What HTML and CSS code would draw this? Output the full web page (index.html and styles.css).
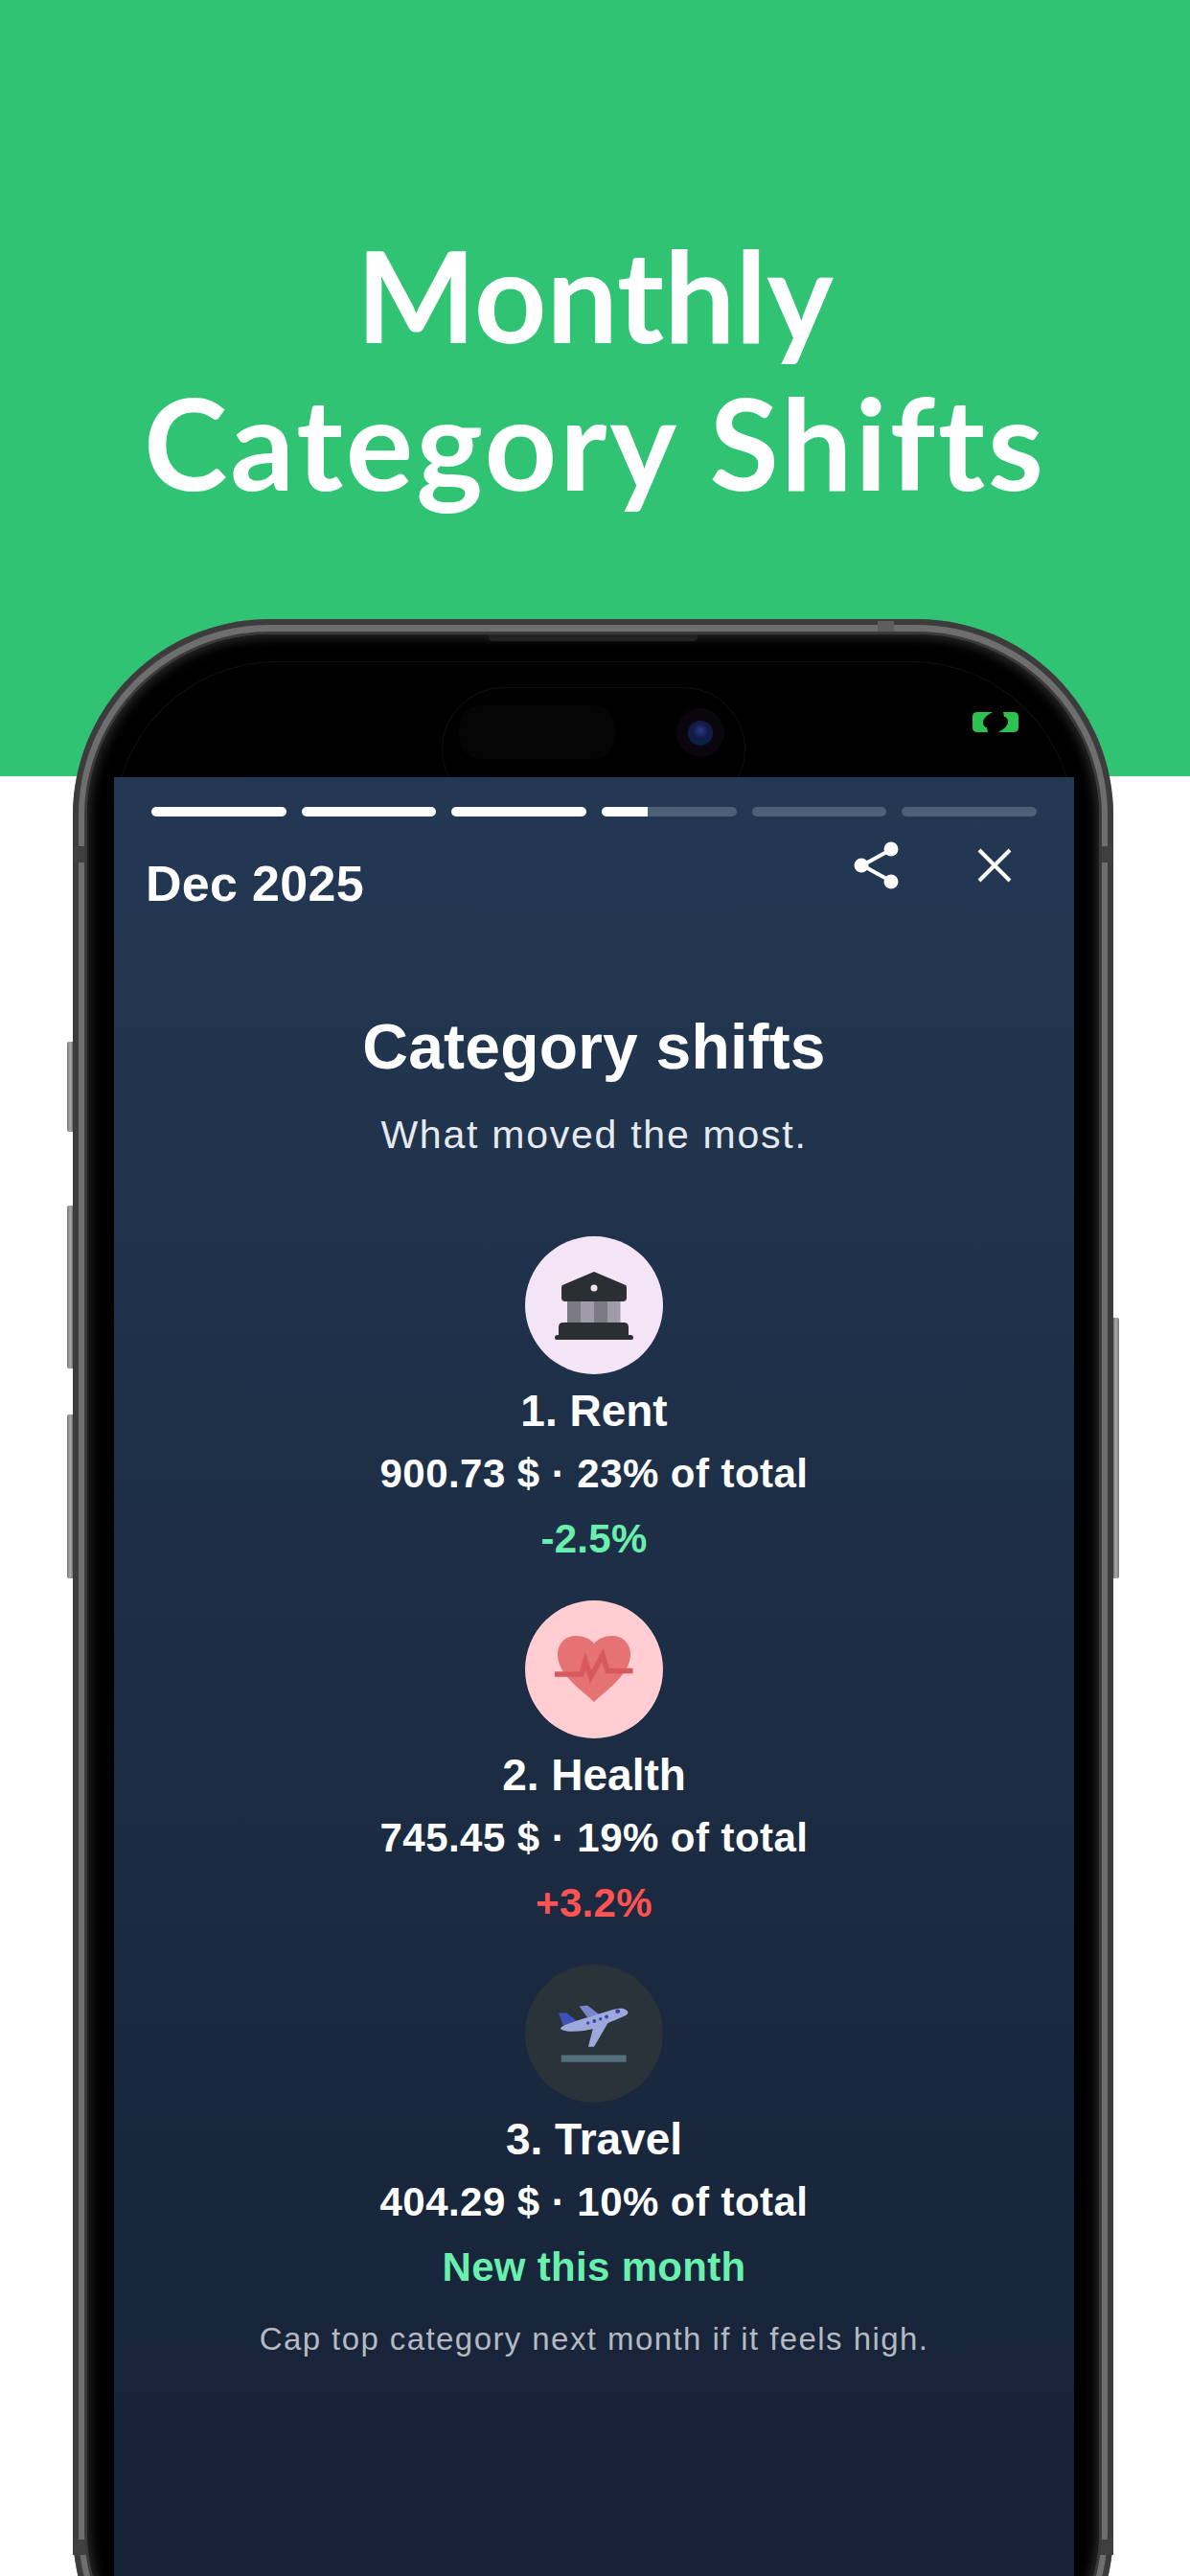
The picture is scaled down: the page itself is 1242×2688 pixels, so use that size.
FILE: index.html
```html
<!doctype html>
<html>
<head>
	<meta charset="utf-8"/>
	<title>Monthly Category Shifts</title>
	<link rel="stylesheet" href="styles.css">
</head>
<body>
<div class="page">
	<div class="hero">
		<h1>Monthly<br/><span class="wide">Category Shifts</span></h1>
	</div>

	<div class="btn btn-l1"></div>
	<div class="btn btn-l2"></div>
	<div class="btn btn-l3"></div>
	<div class="btn btn-r1"></div>

	<div class="phone">
		<div class="antenna ant-top"></div>
		<div class="antenna ant-l1"></div>
		<div class="antenna ant-r1"></div>
		<div class="antenna ant-l2"></div>
		<div class="antenna ant-r2"></div>
		<div class="bezel">
			<div class="speaker"></div>
			<div class="glass-line"></div>
			<div class="status">
				<div class="island-line"></div>
				<div class="island"></div>
				<div class="camera"><div class="lens"></div></div>
				<svg class="battery" viewBox="0 0 48 21">
					<path d="M5 0H21C15 3 11 7 11 11C11 14 13 16 15 16L16 21H5Q0 21 0 16V5Q0 0 5 0Z" fill="#2dc24f"/>
					<path d="M43 21H27C33 18 37 14 37 10C37 7 35 5 33 5L32 0H43Q48 0 48 5V16Q48 21 43 21Z" fill="#2dc24f"/>
				</svg>
			</div>
			<div class="screen">
				<div class="progress">
					<div class="bar done"></div>
					<div class="bar done"></div>
					<div class="bar done"></div>
					<div class="bar"><div class="fill"></div></div>
					<div class="bar"></div>
					<div class="bar"></div>
				</div>

				<div class="topbar">
					<div class="month">Dec 2025</div>
					<div class="actions">
						<svg class="share" viewBox="0 0 48 50">
							<line x1="38" y1="9" x2="9" y2="25" stroke="#fff" stroke-width="4"/>
							<line x1="38" y1="41" x2="9" y2="25" stroke="#fff" stroke-width="4"/>
							<circle cx="39" cy="8" r="7.500" fill="#fff"/>
							<circle cx="8" cy="25" r="7.500" fill="#fff"/>
							<circle cx="39" cy="42" r="7.500" fill="#fff"/>
						</svg>
						<svg class="close" viewBox="0 0 36 36">
							<path d="M2 2L34 34M34 2L2 34" stroke="#fff" stroke-width="4" fill="none"/>
						</svg>
					</div>
				</div>

				<h2>Category shifts</h2>
				<p class="sub">What moved the most.</p>

				<div class="shift">
					<div class="circle rent">
						<svg viewBox="0 0 144 144">
							<path d="M72 37L105 51Q106 52 106 54V64Q106 68 102 68H42Q38 68 38 64V54Q38 52 39 51Z" fill="#2b2e33"/>
							<circle cx="72" cy="54" r="3.500" fill="#f3e5f5"/>
							<rect x="44" y="68" width="14" height="22" fill="#7c7a85"/>
							<rect x="58" y="68" width="14" height="22" fill="#a09ba8"/>
							<rect x="72" y="68" width="14" height="22" fill="#7c7a85"/>
							<rect x="86" y="68" width="13.500" height="22" fill="#a09ba8"/>
							<path d="M40 90H103Q108 90 108 95V103H110Q113 103 113 106Q113 108 110 108H34Q31 108 31 106Q31 103 34 103H35V95Q35 90 40 90Z" fill="#2b2e33"/>
						</svg>
					</div>
					<div class="name">1. Rent</div>
					<div class="amount">900.73 $ · 23% of total</div>
					<div class="delta good">-2.5%</div>
				</div>

				<div class="shift">
					<div class="circle health">
						<svg viewBox="0 0 144 144">
							<path d="M72 106C60 94 34 78 34 56C34 44 43 37 53 37C61 37 68 40 72 45C76 40 83 37 91 37C101 37 110 44 110 56C110 78 84 94 72 106Z" fill="#e57373"/>
							<path d="M31 77H59L63 63L68.500 80L81 57L86 73.500H112.500" stroke="#d7595f" stroke-width="5.500" fill="none"/>
						</svg>
					</div>
					<div class="name">2. Health</div>
					<div class="amount">745.45 $ · 19% of total</div>
					<div class="delta bad">+3.2%</div>
				</div>

				<div class="shift">
					<div class="circle travel">
						<svg viewBox="0 0 144 144">
							<path d="M35 50.500H43.500L54 59L40 64Z" fill="#3f51b5"/>
							<path d="M56.500 43.500L65 42.500L78 52.500L65 55Z" fill="#7986cb"/>
							<path d="M36.700 66.700C40 62 55 58.500 72 53L90 47.500C97 45.500 102 45 105 47C109 49.500 108 52 103 54C92 59 82 63 72 66.700C60 70 42 71.500 36.700 66.700Z" fill="#9fa8da"/>
							<path d="M71 66L87 60L72 85.700H66Z" fill="#9fa8da"/>
							<circle cx="65.700" cy="61" r="1.700" fill="#3949ab"/>
							<circle cx="72.300" cy="59" r="1.900" fill="#3949ab"/>
							<circle cx="78.700" cy="56.700" r="1.700" fill="#3949ab"/>
							<circle cx="85" cy="54.400" r="2" fill="#3949ab"/>
							<ellipse cx="96.700" cy="48.700" rx="2.500" ry="2.200" fill="#3949ab"/>
							<rect x="37.700" y="94.400" width="68" height="7.300" fill="#546e7a"/>
						</svg>
					</div>
					<div class="name">3. Travel</div>
					<div class="amount">404.29 $ · 10% of total</div>
					<div class="delta good">New this month</div>
				</div>

				<p class="note">Cap top category next month if it feels high.</p>
			</div>
		</div>
	</div>
</div>
</body>
</html>
```

FILE: styles.css
```css
html, body {
	margin: 0;
	padding: 0;
}

.page {
	position: relative;
	width: 1242px;
	height: 2688px;
	overflow: hidden;
	background: #fff;
	font-family: "Liberation Sans", Arial, sans-serif;
	color: #fff;
}

.hero {
	height: 810px;
	background: #2fc373;
	padding-top: 230px;
	box-sizing: border-box;
}
.hero h1 {
	margin: 0;
	font-family: Lato, sans-serif;
	font-weight: bold;
	font-size: 132px;
	line-height: 154px;
	text-align: center;
}
.wide {
	letter-spacing: 2.900px;
}

/* side buttons */
.btn {
	position: absolute;
	width: 8px;
	background: linear-gradient(to right, #777, #aaa 45%, #444);
	border-radius: 2px 0 0 2px;
}
.btn-l1 { left: 70px; top: 1087px; height: 94px; }
.btn-l2 { left: 70px; top: 1258px; height: 170px; }
.btn-l3 { left: 70px; top: 1476px; height: 171px; }
.btn-r1 { left: 1160px; top: 1375px; height: 272px; border-radius: 0 2px 2px 0; background: linear-gradient(to left, #777, #aaa 45%, #444); }

.phone {
	position: absolute;
	left: 76px;
	top: 646px;
	width: 1086px;
	height: 2200px;
	box-sizing: border-box;
	padding: 16px 15px;
	border-radius: 205px;
	background: #6e6e6e;
	box-shadow: inset 0 0 0 6px #3c3c3c;
}
.antenna {
	position: absolute;
	background: #3f3f3f;
}
.ant-top { left: 840px; top: 2px; width: 17px; height: 12px; background: #5e5e5e; }
.ant-l1 { left: 0; top: 237px; width: 15px; height: 17px; }
.ant-r1 { right: 0; top: 237px; width: 15px; height: 17px; }
.ant-l2 { left: 0; top: 2004px; width: 15px; height: 16px; }
.ant-r2 { right: 0; top: 2004px; width: 15px; height: 16px; }

.bezel {
	position: relative;
	height: 100%;
	box-sizing: border-box;
	padding: 0 26px 0 28px;
	border-radius: 190px;
	background: #000;
	box-shadow: 0 0 0 3px #3a3a3a, inset 0 0 12px 3px #2c2c2c;
	display: flex;
	flex-direction: column;
}
.speaker {
	position: absolute;
	left: 419px;
	top: 0;
	width: 218px;
	height: 7px;
	background: #222;
	border-radius: 0 0 4px 4px;
}
.glass-line {
	position: absolute;
	left: 28px;
	right: 26px;
	top: 28px;
	height: 400px;
	border: 1px solid #08170f;
	border-bottom: none;
	border-radius: 170px 170px 0 0;
}

.status {
	position: relative;
	height: 149px;
	flex-shrink: 0;
}
.island-line {
	position: absolute;
	left: 342px;
	top: 55px;
	width: 317px;
	height: 130px;
	border: 1px solid #071710;
	border-radius: 65px;
	box-sizing: border-box;
}
.island {
	position: absolute;
	left: 360px;
	top: 74px;
	width: 163px;
	height: 56px;
	background: #050505;
	border-radius: 24px;
}
.camera {
	position: absolute;
	left: 587px;
	top: 77px;
	width: 50px;
	height: 51px;
	background: #0b060e;
	border-radius: 50%;
	display: flex;
	align-items: center;
	justify-content: center;
}
.lens {
	width: 26px;
	height: 26px;
	border-radius: 50%;
	background: radial-gradient(circle at 50% 40%, #2c3a85 0, #141a48 40%, #0c2148 65%, #080b20 100%);
}
.battery {
	position: absolute;
	left: 896px;
	top: 81px;
	width: 48px;
	height: 21px;
}

.screen {
	flex: 1;
	position: relative;
	padding: 31px 39px 0;
	background: linear-gradient(to bottom, #233853, #162236 1877px);
	text-align: center;
}

.progress {
	display: flex;
	gap: 16px;
}
.bar {
	flex: 1;
	height: 10px;
	border-radius: 5px;
	background: #4e6075;
	overflow: hidden;
}
.bar.done {
	background: #fff;
}
.fill {
	width: 34%;
	height: 100%;
	background: #fff;
}

.topbar {
	display: flex;
	justify-content: space-between;
	align-items: flex-start;
	margin-top: 26px;
}
.month {
	margin-left: -6px;
	margin-top: 14px;
	font-size: 52px;
	line-height: 60px;
	font-weight: bold;
	letter-spacing: 0.300px;
}
.actions {
	display: flex;
	align-items: center;
	gap: 81px;
	margin-right: 26px;
}
.share {
	width: 48px;
	height: 50px;
}
.close {
	width: 36px;
	height: 36px;
}

h2 {
	margin: 102px 0 0;
	font-size: 66px;
	line-height: 76px;
	font-weight: bold;
	letter-spacing: 0.200px;
}
.sub {
	margin: 30px 0 82px;
	font-size: 41px;
	line-height: 48px;
	letter-spacing: 1.750px;
	color: #e6e9ee;
}

.shift {
	height: 380px;
}
.circle {
	width: 144px;
	height: 144px;
	margin: 0 auto;
	border-radius: 50%;
}
.circle svg {
	display: block;
	width: 144px;
	height: 144px;
}
.rent { background: #f3e5f5; }
.health { background: #ffcdd2; }
.travel { background: #2a3339; }

.name {
	margin-top: 12px;
	font-size: 46px;
	line-height: 52px;
	font-weight: bold;
}
.amount {
	margin-top: 16px;
	font-size: 42px;
	line-height: 48px;
	font-weight: bold;
	letter-spacing: 0.450px;
}
.delta {
	margin-top: 20px;
	font-size: 42px;
	line-height: 48px;
	font-weight: bold;
	letter-spacing: 0.300px;
}
.good { color: #69f0ae; }
.bad { color: #ff5252; }

.note {
	margin: -9px 0 0;
	font-size: 33px;
	line-height: 40px;
	letter-spacing: 1.420px;
	color: #b5b9c1;
}
```
